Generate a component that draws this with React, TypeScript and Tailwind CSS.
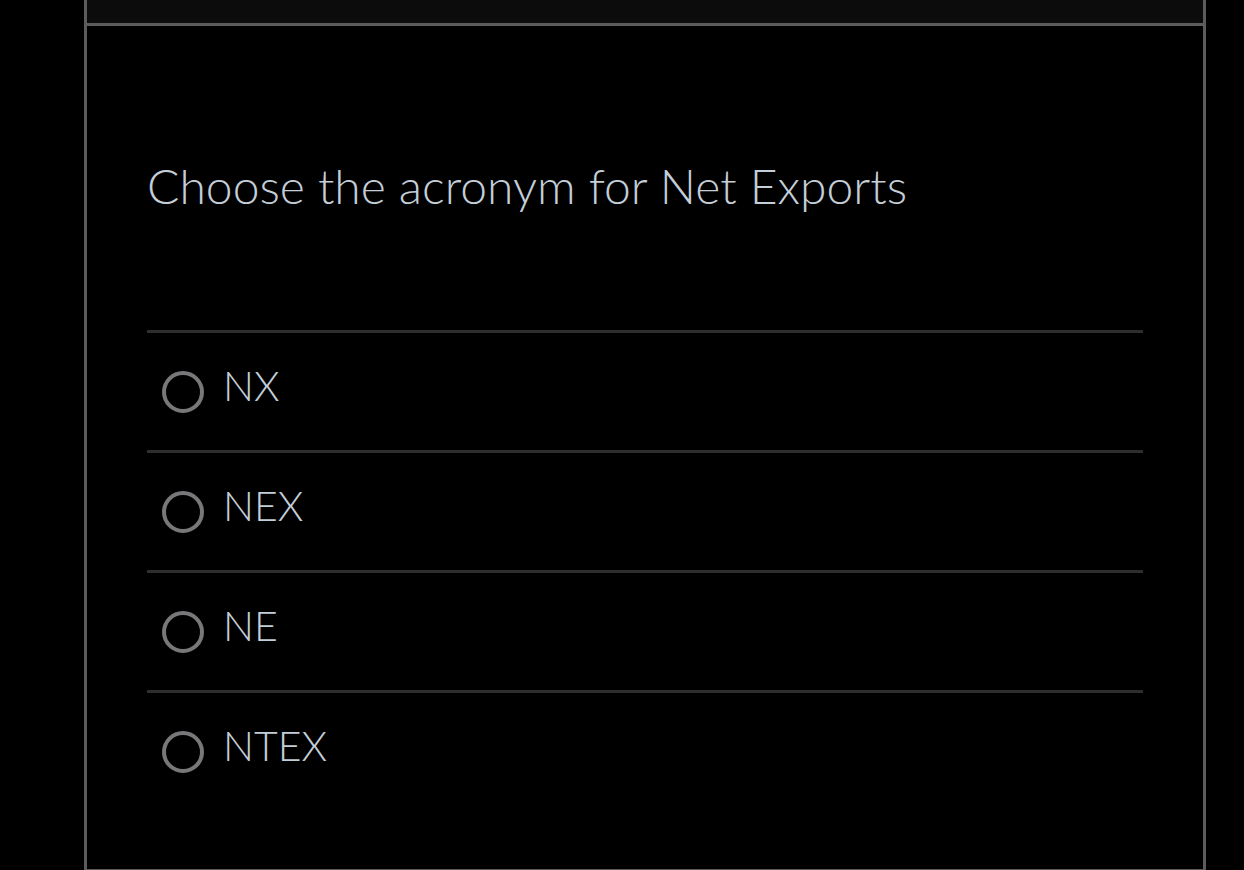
import React from 'react';

const options = ['NX', 'NEX', 'NE', 'NTEX'];

const App: React.FC = () => {
  return (
    <div className="w-[1244px] h-[870px] bg-black overflow-hidden" style={{ fontFamily: 'Lato, "Noto Sans", sans-serif' }}>
      <div className="ml-[84px] w-[1122px] h-[870px] border-x-[3px] border-b border-[#5c5c5c] flex flex-col">
        <div className="h-[26px] bg-[#0c0c0c] border-b-[3px] border-[#5c5c5c]" />
        <div className="pl-[60px] pr-[60px] pt-[130px]">
          <h1 className="text-[48px] font-light leading-[60px] text-[#c3ced8] tracking-normal">
            Choose the acronym for Net Exports
          </h1>
          <div className="mt-[114px]">
            {options.map((opt) => (
              <div key={opt} className="border-t-[3px] border-[#2e2e2e] h-[120px] flex items-start">
                <label className="flex items-start gap-[19px] pl-[15px] pt-[38px]">
                  <span className="w-[42px] h-[42px] rounded-full border-[4px] border-[#78787a] shrink-0" />
                  <span className="text-[41px] font-light leading-[42px] -mt-[6px] text-[#c3ced8]">{opt}</span>
                </label>
              </div>
            ))}
          </div>
        </div>
      </div>
    </div>
  );
};

export default App;
